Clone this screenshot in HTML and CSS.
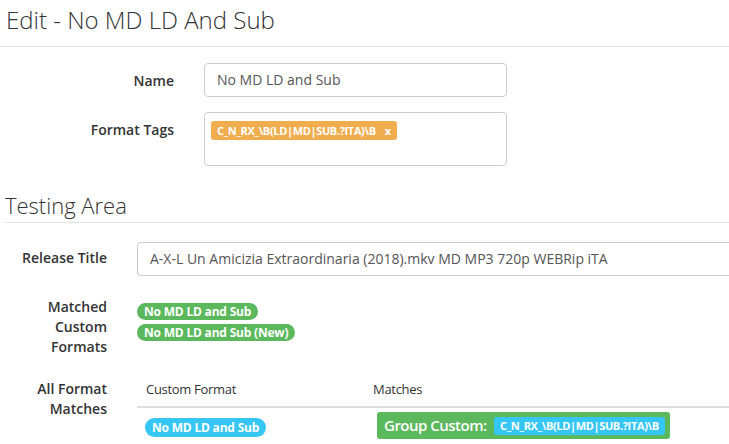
FILE: index.html
```html
<!DOCTYPE html>
<html>
<head>
<meta charset="utf-8">
<link rel="stylesheet" href="styles.css">
</head>
<body>
<h1 class="title">Edit - No MD LD And Sub</h1>
<div class="form">
  <label class="flabel">Name</label>
  <div class="input">No MD LD and Sub</div>
  <label class="flabel">Format Tags</label>
  <div class="tagbox"><span class="tag orange">C_N_RX_\B(LD|MD|SUB.?ITA)\B<span class="x">x</span></span></div>
</div>
<h2 class="section">Testing Area</h2>
<div class="test">
  <label class="tlabel first">Release Title</label>
  <div class="input wide">A-X-L Un Amicizia Extraordinaria (2018).mkv MD MP3 720p WEBRip iTA</div>
  <label class="tlabel matched">Matched Custom Formats</label>
  <div class="pills">
    <span class="pill green">No MD LD and Sub</span>
    <span class="pill green">No MD LD and Sub (New)</span>
  </div>
  <label class="tlabel all">All Format Matches</label>
  <div class="table">
    <div class="thead">
      <div class="c1">Custom Format</div>
      <div class="c2">Matches</div>
    </div>
    <div class="trow">
      <div class="c1"><span class="pill blue">No MD LD and Sub</span></div>
      <div class="c2"><span class="group">Group Custom: <span class="inner">C_N_RX_\B(LD|MD|SUB.?ITA)\B</span></span></div>
    </div>
  </div>
</div>
</body>
</html>
```
FILE: styles.css
```css
html, body { margin: 0; padding: 0; background: #fff; overflow: hidden; }
body { font-family: "Open Sans", "DejaVu Sans", sans-serif; font-size: 14px; color: #333; width: 729px; }
.title { font-size: 24px; font-weight: 300; margin: 0; padding: 4px 0 10px 6px; line-height: 32px; border-bottom: 1px solid #e5e5e5; }
.form { display: grid; grid-template-columns: 174px 303px; column-gap: 30px; row-gap: 15px; margin-top: 16px; }
.flabel { text-align: right; font-weight: 600; padding-top: 8px; line-height: 20px; }
.input { height: 34px; box-sizing: border-box; border: 1px solid #ccc; border-radius: 4px; padding: 6px 12px; line-height: 20px; color: #555; white-space: nowrap; overflow: hidden; }
.tagbox { height: 54px; box-sizing: border-box; border: 1px solid #ccc; border-radius: 4px; padding: 7px 6px; }
.tag { display: inline-block; font-size: 11px; font-weight: 700; color: #fff; padding: 0 6px; line-height: 19px; border-radius: 3px; letter-spacing: -0.35px; }
.orange { background: #f0ad4e; }
.x { margin-left: 9px; }
.section { font-size: 22px; font-weight: 300; margin: 24px 0 0 5px; line-height: 30px; padding-bottom: 2px; border-bottom: 1px solid #e5e5e5; }
.test { display: grid; grid-template-columns: 107px 620px; column-gap: 30px; margin-top: 19px; align-items: start; }
.tlabel { text-align: right; font-weight: 600; line-height: 20px; }
.tlabel.first { padding-top: 6px; }
.tlabel.matched { margin-top: 21px; }
.tlabel.all { margin-top: 22px; }
.input.wide { width: 620px; border-right: none; border-radius: 4px 0 0 4px; }
.pills { margin-top: 27px; display: flex; flex-direction: column; align-items: flex-start; gap: 4px; }
.pill { display: inline-block; font-size: 12px; font-weight: 700; color: #fff; padding: 0 7px; line-height: 17px; border-radius: 9px; letter-spacing: -0.2px; }
.green { background: #5cb85c; }
.blue { background: #36c6f4; line-height: 19px; border-radius: 10px; margin-top: 6px; }
.table { margin-top: 19px; }
.thead { display: flex; border-bottom: 2px solid #ddd; font-size: 13px; font-weight: 400; padding: 4px 0 8px; line-height: 18px; letter-spacing: -0.3px; }
.c1 { width: 227px; padding-left: 9px; box-sizing: border-box; }
.c2 { flex: 1; padding-left: 9px; }
.trow { display: flex; align-items: flex-start; padding-top: 4px; }
.trow .c1 { padding-left: 8px; }
.trow .c2 { padding-left: 13px; }
.group { display: inline-block; background: #5cb85c; color: #fff; font-weight: 600; font-size: 15px; padding: 3px 5px 3px 7px; line-height: 21px; border-radius: 3px; letter-spacing: -0.5px; }
.inner { display: inline-block; background: #36c6f4; font-size: 11px; font-weight: 700; padding: 0 6px; line-height: 18px; border-radius: 3px; margin-left: 4px; vertical-align: 1px; letter-spacing: -0.35px; }
```
